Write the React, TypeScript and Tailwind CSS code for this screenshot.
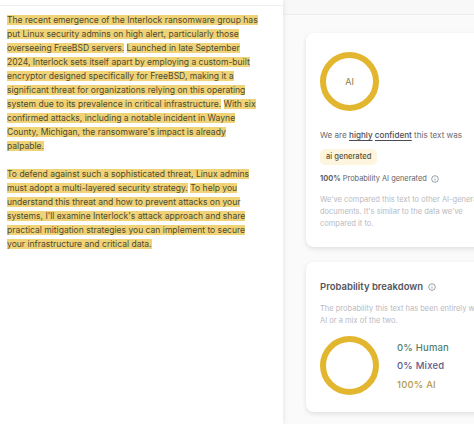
const font = "[font-family:Inter,'Liberation_Sans',sans-serif]";

function Hl({ children }: { children: React.ReactNode }) {
  return <span className="bg-[#f0d377] [box-decoration-break:clone]">{children}</span>;
}

function Info({ size = 9 }: { size?: number }) {
  return (
    <svg width={size} height={size} viewBox="0 0 12 12" fill="none" stroke="#6b7280" strokeWidth="1">
      <circle cx="6" cy="6" r="5" />
      <path d="M6 5.5v3M6 3.5v.6" />
    </svg>
  );
}

function Ring({ label }: { label?: string }) {
  return (
    <div className="flex h-[59px] w-[59px] shrink-0 items-center justify-center rounded-full border-[6px] border-[#e3b62f]">
      {label && <span className="text-[9px] text-[#8f7a45]">{label}</span>}
    </div>
  );
}

export default function App() {
  return (
    <div className={`flex h-[424px] w-[474px] overflow-hidden bg-[#fafafa] ${font}`}>
      <div className="z-10 h-full w-[283px] shrink-0 bg-white pt-[5px] shadow-[1px_0_5px_rgba(0,0,0,0.08)]">
        <div className="whitespace-nowrap border-t border-[#eeeef4] pl-[7px] pt-[7px] text-[8.55px] leading-[14px] text-[#4e4a33]">
          <p>
            <Hl>The recent emergence of the Interlock ransomware group has</Hl><br />
            <Hl>put Linux security admins on high alert, particularly those</Hl><br />
            <Hl>overseeing FreeBSD servers.</Hl>{" "}
            <Hl>Launched in late September</Hl><br />
            <Hl>2024, Interlock sets itself apart by employing a custom-built</Hl><br />
            <Hl>encryptor designed specifically for FreeBSD, making it a</Hl><br />
            <Hl>significant threat for organizations relying on this operating</Hl><br />
            <Hl>system due to its prevalence in critical infrastructure.</Hl>{" "}
            <Hl>With six</Hl><br />
            <Hl>confirmed attacks, including a notable incident in Wayne</Hl><br />
            <Hl>County, Michigan, the ransomware's impact is already</Hl><br />
            <Hl>palpable.</Hl>
          </p>
          <p className="mt-[14px]">
            <Hl>To defend against such a sophisticated threat, Linux admins</Hl><br />
            <Hl>must adopt a multi-layered security strategy.</Hl>{" "}
            <Hl>To help you</Hl><br />
            <Hl>understand this threat and how to prevent attacks on your</Hl><br />
            <Hl>systems, I'll examine Interlock's attack approach and share</Hl><br />
            <Hl>practical mitigation strategies you can implement to secure</Hl><br />
            <Hl>your infrastructure and critical data.</Hl>
          </p>
        </div>
      </div>
      <div className="min-w-0 flex-1">
        <div className="h-[15px] border-b border-[#eeeeee] bg-[#f8f8f8]" />
        <div className="flex flex-col gap-[15px] pl-[23px] pt-[18px]">
          <div className="h-[214px] w-[230px] rounded-l-[8px] bg-white pl-[14px] pt-[19px] shadow-[0_2px_5px_rgba(0,0,0,0.1)]">
            <Ring label="AI" />
            <p className="mt-[18px] whitespace-nowrap text-[8.1px] leading-[12px] text-[#6b6b70]">
              We are <span className="font-medium text-[#4b4b55] underline underline-offset-2">highly</span>{" "}
              <span className="font-medium text-[#4b4b55] underline underline-offset-2">confident</span> this text was
            </p>
            <div className="mt-[6px] inline-block rounded-[5px] bg-[#fdf5dd] px-[6px] py-[3px] text-[7.6px] font-medium leading-[10px] text-[#5c5238]">
              ai generated
            </div>
            <div className="mt-[8px] flex items-center gap-[4px] whitespace-nowrap text-[7.4px] leading-[12px] text-[#5f5f66]">
              <span><b className="font-bold">100%</b> Probability AI generated</span>
              <Info size={8} />
            </div>
            <p className="mt-[9px] whitespace-nowrap text-[7.5px] leading-[12px] text-[#b9b9c0]">
              We've compared this text to other AI-generated
              <br />
              documents. It's similar to the data we've
              <br />
              compared it to.
            </p>
          </div>
          <div className="h-[150px] w-[230px] rounded-l-[8px] bg-white pl-[14px] pt-[18px] shadow-[0_2px_5px_rgba(0,0,0,0.1)]">
            <div className="flex items-center gap-[5px] text-[9.5px] font-semibold text-[#55555c]">
              Probability breakdown <Info size={8} />
            </div>
            <p className="mt-[9px] whitespace-nowrap text-[7.5px] leading-[12px] text-[#b9b9c0]">
              The probability this text has been entirely written by
              <br />
              AI or a mix of the two.
            </p>
            <div className="mt-[9px] flex items-center gap-[18px]">
              <Ring />
              <div className="flex flex-col gap-[5.5px] text-[9.5px] font-medium leading-[13px] tracking-[0.2px]">
                <span className="text-[#54806f]">0% Human</span>
                <span className="text-[#5d5a8c]">0% Mixed</span>
                <span className="text-[#b49a4a]">100% AI</span>
              </div>
            </div>
          </div>
        </div>
      </div>
    </div>
  );
}
